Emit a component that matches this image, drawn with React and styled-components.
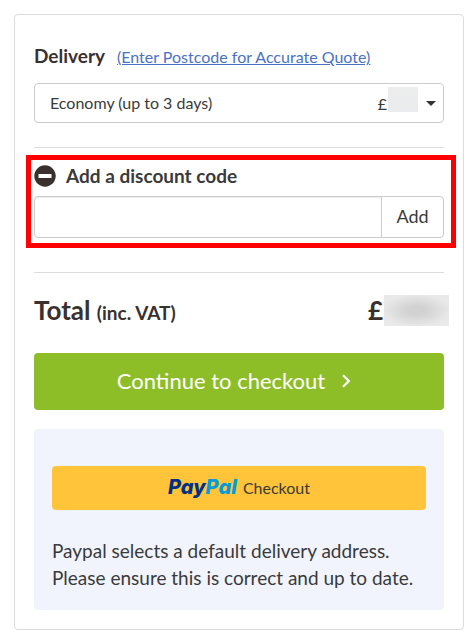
import React, { useState } from "react";
import styled, { createGlobalStyle } from "styled-components";

const App = () => {
  const [code, setCode] = useState("");

  return (
    <>
      <GlobalStyle />
      <Summary>
        <DeliveryHeader>
          <DeliveryLabel htmlFor="delivery">Delivery</DeliveryLabel>
          <QuoteLink href="#postcode">
            (Enter Postcode for Accurate Quote)
          </QuoteLink>
        </DeliveryHeader>

        <SelectWrap>
          <Select id="delivery" defaultValue="economy">
            <option value="economy">Economy (up to 3 days)</option>
          </Select>
          <SelectPrice>
            £<HiddenPrice />
            <Caret viewBox="0 0 10 5" aria-hidden="true">
              <path d="M0 0h10L5 5z" fill="currentColor" />
            </Caret>
          </SelectPrice>
        </SelectWrap>

        <Divider />

        <Discount>
          <DiscountToggle type="button" aria-expanded="true">
            <svg width="22" height="22" viewBox="0 0 22 22" aria-hidden="true">
              <circle cx="11" cy="11" r="10.7" fill="#3a302e" />
              <rect x="4.5" y="9" width="13" height="4" rx="0.5" fill="#fff" />
            </svg>
            Add a discount code
          </DiscountToggle>
          <CodeRow>
            <CodeInput
              type="text"
              aria-label="Discount code"
              value={code}
              onChange={(e) => setCode(e.target.value)}
            />
            <AddButton type="button">Add</AddButton>
          </CodeRow>
        </Discount>

        <Divider />

        <Total>
          <TotalLabel>
            Total <small>(inc. VAT)</small>
          </TotalLabel>
          <TotalPrice>
            £<HiddenTotal />
          </TotalPrice>
        </Total>

        <CheckoutButton type="button">
          Continue to checkout
          <svg width="10" height="14" viewBox="0 0 10 14" aria-hidden="true">
            <path
              d="M2 1.2L7.8 7L2 12.8"
              fill="none"
              stroke="currentColor"
              strokeWidth="2.2"
            />
          </svg>
        </CheckoutButton>

        <PaypalPanel>
          <PaypalButton type="button">
            <PaypalLogo>
              Pay<span>Pal</span>
            </PaypalLogo>
            Checkout
          </PaypalButton>
          <PaypalNote>
            Paypal selects a default delivery address. Please ensure this is
            correct and up to date.
          </PaypalNote>
        </PaypalPanel>
      </Summary>
    </>
  );
};

export default App;

const GlobalStyle = createGlobalStyle`
  *,
  *::before,
  *::after {
    box-sizing: border-box;
  }

  body {
    margin: 0;
    padding: 14px 10px 12px 14px;
    background: #fff;
    color: #3a3a3a;
    font-family: Lato, "Liberation Sans", sans-serif;
    font-size: 16px;
  }

  button,
  input,
  select {
    color: inherit;
    font: inherit;
  }

  button {
    cursor: pointer;
  }
`;

const Summary = styled.main`
  padding: 28px 19px 19px;
  border: 1px solid #dcdcdc;
  border-radius: 4px;
`;

const DeliveryHeader = styled.div`
  display: flex;
  align-items: baseline;
  gap: 12px;
  margin-bottom: 13px;
  line-height: 26px;
`;

const DeliveryLabel = styled.label`
  color: #3a302e;
  font-size: 19px;
  font-weight: 700;
`;

const QuoteLink = styled.a`
  color: #4a72c4;
  white-space: nowrap;
`;

const SelectWrap = styled.div`
  position: relative;
`;

const Select = styled.select`
  display: block;
  width: 100%;
  height: 40px;
  padding: 0 80px 2px 15px;
  appearance: none;
  background: #fff;
  border: 1px solid #ccc;
  border-radius: 4px;
`;

const SelectPrice = styled.span`
  position: absolute;
  top: 0;
  right: 8px;
  display: flex;
  align-items: center;
  height: 40px;
  pointer-events: none;
`;

const HiddenPrice = styled.span`
  width: 30px;
  height: 25px;
  margin: 0 8px 7px 1px;
  background: linear-gradient(#ededed, #e9ebee);
`;

const Caret = styled.svg`
  width: 10px;
  height: 5px;
  color: #333;
`;

const Divider = styled.hr`
  height: 1px;
  margin: 24px 0 0;
  background: #dcdcdc;
  border: 0;
`;

const Discount = styled.section`
  margin: 7px -12px 0 -8px;
  padding: 3px 7px 5px 3px;
  border: 5px solid #fe0000;
`;

const DiscountToggle = styled.button`
  display: flex;
  align-items: center;
  gap: 10px;
  margin-bottom: 7px;
  padding: 0;
  background: none;
  border: 0;
  font-size: 19px;
  font-weight: 700;
  line-height: 26px;
`;

const CodeRow = styled.div`
  display: flex;
  height: 42px;
`;

const CodeInput = styled.input`
  flex: 1;
  min-width: 0;
  padding: 0 12px;
  background: #fff;
  border: 1px solid #ccc;
  border-radius: 4px 0 0 4px;
  box-shadow: inset 0 1px 1px rgba(0, 0, 0, 0.08);
`;

const AddButton = styled.button`
  width: 63px;
  margin-left: -1px;
  padding: 0 0 2px;
  background: #fff;
  border: 1px solid #ccc;
  border-radius: 0 4px 4px 0;
  font-size: 18px;
`;

const Total = styled.div`
  display: flex;
  justify-content: space-between;
  align-items: center;
  height: 38px;
  margin: 18px 0 24px;
  color: #3a302e;
  font-size: 26px;
  font-weight: 700;
`;

const TotalLabel = styled.span`
  small {
    font-size: 19px;
  }
`;

const TotalPrice = styled.span`
  display: flex;
  align-items: center;
  margin-right: -5px;
`;

const HiddenTotal = styled.span`
  width: 65px;
  height: 31px;
  margin-left: 1px;
  background: radial-gradient(ellipse, #d3d2d2 20%, #e9e9e9 75%);
`;

const CheckoutButton = styled.button`
  display: flex;
  justify-content: center;
  align-items: center;
  gap: 16px;
  width: 100%;
  height: 57px;
  padding: 0 10px 2px 0;
  background: #8dbe27;
  border: 0;
  border-radius: 4px;
  color: #fff;
  font-size: 22px;
`;

const PaypalPanel = styled.section`
  margin-top: 19px;
  padding: 37px 18px 19px;
  background: #f1f4fd;
  border-radius: 4px;
`;

const PaypalButton = styled.button`
  display: flex;
  justify-content: center;
  align-items: baseline;
  gap: 6px;
  width: 100%;
  height: 44px;
  padding: 0;
  background: #ffc439;
  border: 0;
  border-radius: 4px;
  font-size: 16px;
  line-height: 42px;
`;

const PaypalLogo = styled.span`
  color: #003087;
  font-family: Inter, Lato, sans-serif;
  font-feature-settings: "cv11";
  font-size: 20px;
  font-style: italic;
  font-weight: 800;

  span {
    color: #009cde;
  }
`;

const PaypalNote = styled.p`
  margin: 27px 0 0;
  font-size: 19px;
  line-height: 27px;
`;
